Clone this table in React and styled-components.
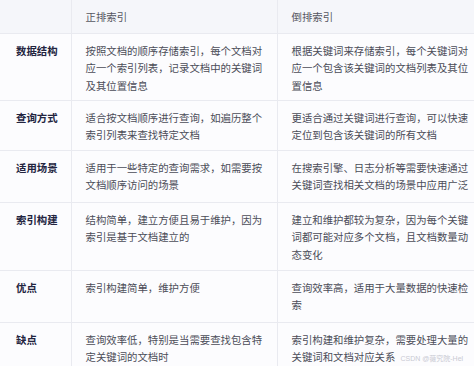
import React from "react";
import styled, { createGlobalStyle } from "styled-components";

const Global = createGlobalStyle`
  html, body {
    margin: 0;
    padding: 0;
    background: #fcfcfe;
    overflow: hidden;
  }
  body {
    font-family: "Noto Sans CJK SC", "Noto Sans", sans-serif;
  }
`;

const Table = styled.table`
  width: 483px;
  border-collapse: collapse;
  table-layout: fixed;
  font-size: 10.4px;
  line-height: 17.5px;
  color: #4b4c58;
`;

const HeadRow = styled.tr`
  height: 33px;
  background: #f5f6fa;
`;

const Row = styled.tr`
  height: ${(p) => p.$h}px;
  background: #fcfcfe;
`;

const Th = styled.th`
  text-align: left;
  font-weight: 400;
  color: #555661;
  padding: 0 12px 0 14px;
  border-right: 1px solid #e9eaf0;
  border-bottom: 1px solid #e9eaf0;
  vertical-align: middle;
`;

const Label = styled.td`
  box-sizing: border-box;
  padding: 8px 4px 0 16px;
  font-weight: 700;
  color: #23243f;
  vertical-align: top;
  border-right: 1px solid #e9eaf0;
  border-bottom: 1px solid #e9eaf0;
`;

const Cell = styled.td`
  padding: 8px 4px 0 14px;
  vertical-align: top;
  border-right: 1px solid #e9eaf0;
  border-bottom: 1px solid #e9eaf0;
`;

const Line = styled.div`
  white-space: nowrap;
`;

const Mark = styled.span`
  margin-left: 5px;
  font-size: 7px;
  line-height: 1;
  color: #c9cad3;
  font-family: "Liberation Sans", "Noto Sans CJK SC", sans-serif;
`;

const rows = [
  {
    h: 67,
    label: "数据结构",
    a: ["按照文档的顺序存储索引，每个文档对", "应一个索引列表，记录文档中的关键词", "及其位置信息"],
    b: ["根据关键词来存储索引，每个关键词对", "应一个包含该关键词的文档列表及其位", "置信息"],
  },
  {
    h: 50,
    label: "查询方式",
    a: ["适合按文档顺序进行查询，如遍历整个", "索引列表来查找特定文档"],
    b: ["更适合通过关键词进行查询，可以快速", "定位到包含该关键词的所有文档"],
  },
  {
    h: 52,
    label: "适用场景",
    a: ["适用于一些特定的查询需求，如需要按", "文档顺序访问的场景"],
    b: ["在搜索引擎、日志分析等需要快速通过", "关键词查找相关文档的场景中应用广泛"],
  },
  {
    h: 68,
    label: "索引构建",
    a: ["结构简单，建立方便且易于维护，因为", "索引是基于文档建立的"],
    b: ["建立和维护都较为复杂，因为每个关键", "词都可能对应多个文档，且文档数量动", "态变化"],
  },
  {
    h: 52,
    label: "优点",
    a: ["索引构建简单，维护方便"],
    b: ["查询效率高，适用于大量数据的快速检", "索"],
  },
  {
    h: 52,
    label: "缺点",
    a: ["查询效率低，特别是当需要查找包含特", "定关键词的文档时"],
    b: ["索引构建和维护复杂，需要处理大量的", "关键词和文档对应关系"],
    mark: true,
  },
];

function Lines({ items, mark }) {
  return items.map((t, i) => (
    <Line key={i}>
      {t}
      {mark && i === items.length - 1 && <Mark>CSDN @薇究院-Hel</Mark>}
    </Line>
  ));
}

export default function App() {
  return (
    <>
      <Global />
      <Table>
        <colgroup>
          <col style={{ width: 71 }} />
          <col style={{ width: 206 }} />
          <col style={{ width: 206 }} />
        </colgroup>
        <thead>
          <HeadRow>
            <Th />
            <Th>正排索引</Th>
            <Th>倒排索引</Th>
          </HeadRow>
        </thead>
        <tbody>
          {rows.map((r) => (
            <Row key={r.label} $h={r.h}>
              <Label>{r.label}</Label>
              <Cell>
                <Lines items={r.a} />
              </Cell>
              <Cell>
                <Lines items={r.b} mark={r.mark} />
              </Cell>
            </Row>
          ))}
        </tbody>
      </Table>
    </>
  );
}
